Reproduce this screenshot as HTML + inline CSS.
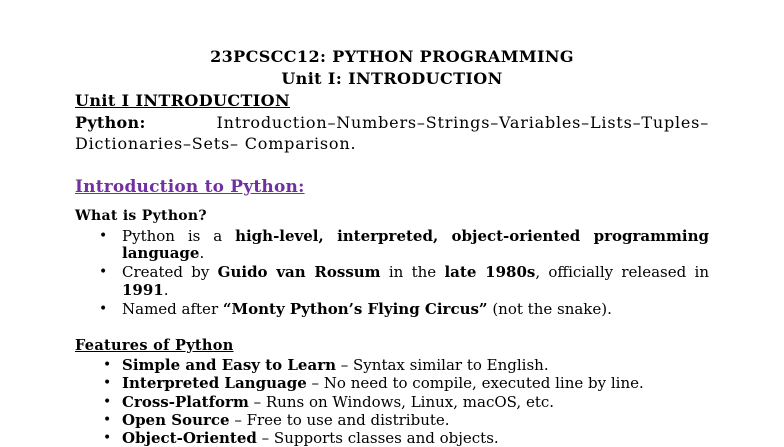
<!DOCTYPE html>
<html><head><meta charset="utf-8"><style>
body{margin:0;width:784px;height:441px;background:#fff;overflow:hidden;position:relative;font-family:"DejaVu Serif","Liberation Serif",serif;color:#000;}
.l{position:absolute;white-space:nowrap;font-size:15px;line-height:18px;}
.c{left:0;width:784px;text-align:center;}
b{font-weight:bold;}
.u{text-decoration:underline;}
.j{text-align:justify;text-align-last:justify;}
.t{font-size:16px;letter-spacing:0.8px;}
.dot{position:absolute;font-size:14px;line-height:18px;}
</style></head><body>
<div class="l c" style="top:48px;font-weight:bold;font-size:16px;letter-spacing:0.4px">23PCSCC12: PYTHON PROGRAMMING</div>
<div class="l c" style="top:70px;font-weight:bold;font-size:16px;letter-spacing:0.4px">Unit I: INTRODUCTION</div>
<div class="l u" style="top:92px;left:75px;font-weight:bold;font-size:16px;letter-spacing:0.4px">Unit I INTRODUCTION</div>
<div class="l j t" style="top:114px;left:75px;width:634px"><b style="letter-spacing:0.3px">Python:</b> Introduction–Numbers–Strings–Variables–Lists–Tuples–</div>
<div class="l t" style="top:135px;left:75px">Dictionaries–Sets– Comparison.</div>
<div class="l u" style="top:178px;left:75px;font-weight:bold;font-size:17px;letter-spacing:0.2px;color:#7030a0">Introduction to Python:</div>
<div class="l" style="top:207px;left:75px;font-weight:bold;font-size:14px;letter-spacing:0.3px">What is Python?</div>
<div class="dot" style="top:227px;left:99px">•</div>
<div class="l j" style="top:227px;left:122px;width:587px">Python is a <b>high-level, interpreted, object-oriented programming</b></div>
<div class="l" style="top:244px;left:122px"><b>language</b>.</div>
<div class="dot" style="top:263px;left:99px">•</div>
<div class="l j" style="top:263px;left:122px;width:587px">Created by <b>Guido van Rossum</b> in the <b>late 1980s</b>, officially released in</div>
<div class="l" style="top:281px;left:122px"><b>1991</b>.</div>
<div class="dot" style="top:300px;left:99px">•</div>
<div class="l" style="top:300px;left:122px">Named after <b>“Monty Python’s Flying Circus”</b> (not the snake).</div>
<div class="l u" style="top:337px;left:75px;font-weight:bold;font-size:14.5px;letter-spacing:0.3px">Features of Python</div>
<div class="dot" style="top:356px;left:103px">•</div>
<div class="l" style="top:356px;left:122px"><b>Simple and Easy to Learn</b> – Syntax similar to English.</div>
<div class="dot" style="top:374px;left:103px">•</div>
<div class="l" style="top:374px;left:122px"><b>Interpreted Language</b> – No need to compile, executed line by line.</div>
<div class="dot" style="top:393px;left:103px">•</div>
<div class="l" style="top:393px;left:122px"><b>Cross-Platform</b> – Runs on Windows, Linux, macOS, etc.</div>
<div class="dot" style="top:411px;left:103px">•</div>
<div class="l" style="top:411px;left:122px"><b>Open Source</b> – Free to use and distribute.</div>
<div class="dot" style="top:429px;left:103px">•</div>
<div class="l" style="top:429px;left:122px"><b>Object-Oriented</b> – Supports classes and objects.</div>
</body></html>
